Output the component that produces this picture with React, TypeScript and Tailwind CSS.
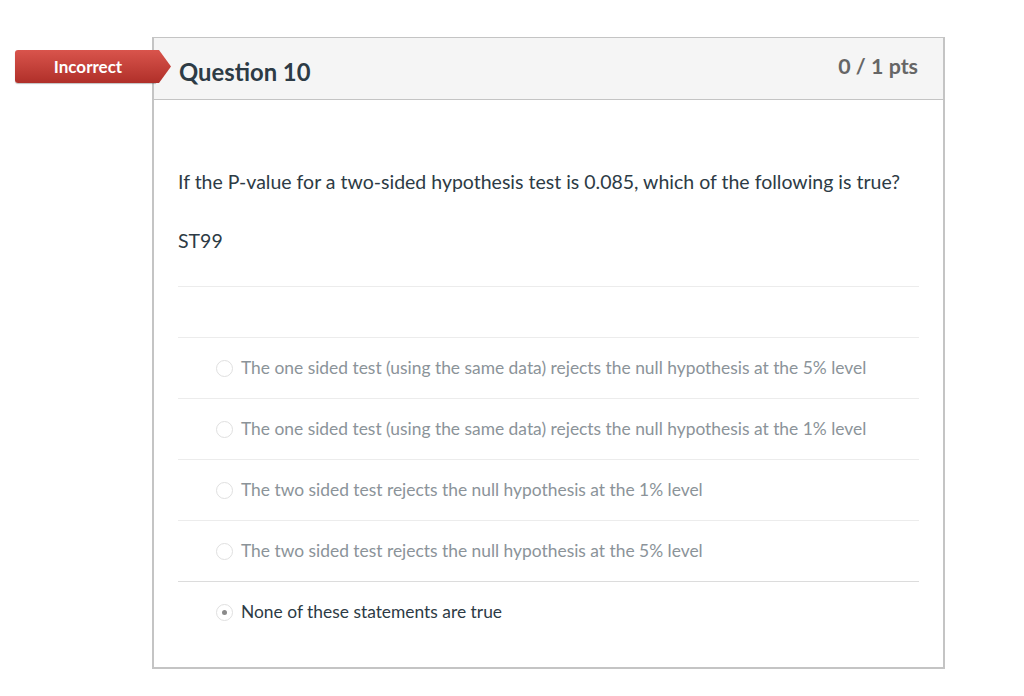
const answers = [
  { text: "The one sided test (using the same data) rejects the null hypothesis at the 5% level", selected: false },
  { text: "The one sided test (using the same data) rejects the null hypothesis at the 1% level", selected: false },
  { text: "The two sided test rejects the null hypothesis at the 1% level", selected: false },
  { text: "The two sided test rejects the null hypothesis at the 5% level", selected: false },
  { text: "None of these statements are true", selected: true },
];

function Radio({ checked }: { checked: boolean }) {
  return (
    <span className="w-[17px] h-[17px] rounded-full border border-[#e0e0e0] bg-white flex items-center justify-center shrink-0">
      {checked && <span className="w-[5px] h-[5px] rounded-full bg-[#8a8a8a]" />}
    </span>
  );
}

export default function App() {
  return (
    <div className="relative w-[1024px] h-[696px] bg-white pt-[37px] font-['Lato','Liberation_Sans',sans-serif]">
      {/* badge */}
      <div className="absolute left-[15px] top-[50px] flex">
        <div className="w-[141px] h-[33px] rounded-l-[3px] bg-gradient-to-b from-[#d9544c] to-[#b02f29] flex items-center justify-center text-white font-bold text-[17px] pl-[5px] shadow-[0_1px_1px_rgba(0,0,0,0.25)]">
          Incorrect
        </div>
        <svg width="16" height="33" viewBox="0 0 16 33" className="-ml-px">
          <defs>
            <linearGradient id="g" x1="0" y1="0" x2="0" y2="1">
              <stop offset="0" stopColor="#d9544c" />
              <stop offset="1" stopColor="#b02f29" />
            </linearGradient>
          </defs>
          <path d="M0 0 L4 0 L16 16.5 L4 33 L0 33 Z" fill="url(#g)" />
        </svg>
      </div>

      <div className="ml-[152px] w-[793px] border-l-2 border-r-2 border-b-2 border-t border-[#c4c4c4]">
        <div className="h-[62px] bg-[#f5f5f5] border-b border-[#c4c4c4] flex justify-between px-[25px]">
          <h2 className="text-[23.8px] font-bold text-[#2d3b45] mt-[17px] leading-[34px]">Question 10</h2>
          <div className="text-[21.4px] font-bold text-[#666666] mt-[13px] leading-[30px]">0 / 1 pts</div>
        </div>

        <div className="px-[24px] pt-[68px] pb-[25px]">
          <p className="text-[19.5px] leading-[27px] text-[#2d3b45]">
            If the P-value for a two-sided hypothesis test is 0.085, which of the following is true?
          </p>
          <p className="text-[19.5px] leading-[27px] text-[#2d3b45] mt-[32px]">ST99</p>
          <div className="mt-[32px] border-t border-[#ececec]" />
          <div className="mt-[50px]">
            {answers.map((a, i) => (
              <div
                key={i}
                className={`h-[61px] flex items-center gap-[8px] pl-[38px] border-t ${
                  i === 4 ? "border-[#dcdcdc]" : "border-[#ececec]"
                }`}
              >
                <Radio checked={a.selected} />
                <span className={`text-[17.4px] ${a.selected ? "text-[#2d3b45]" : "text-[#8b9399]"}`}>{a.text}</span>
              </div>
            ))}
          </div>
        </div>
      </div>
    </div>
  );
}
